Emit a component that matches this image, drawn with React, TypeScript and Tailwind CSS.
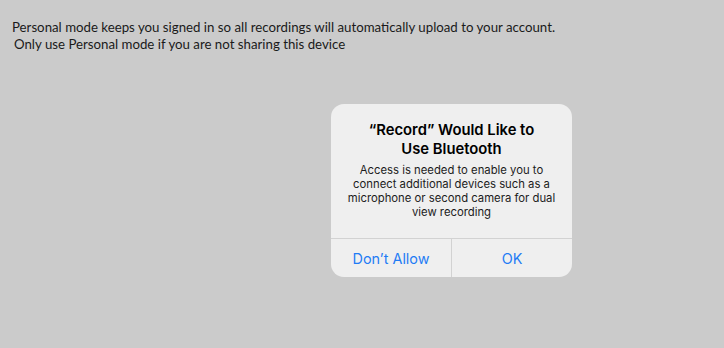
export default function App() {
  return (
    <div className="relative w-[724px] h-[348px] bg-[#cbcbcb] overflow-hidden">
      <div className="pt-[19px] pl-[12px] text-[13.25px] leading-[17px] text-[#1a1a1a]" style={{ fontFamily: 'Lato, "Open Sans", sans-serif' }}>
        <div>Personal mode keeps you signed in so all recordings will automatically upload to your account.</div>
        <div className="pl-[2px]">Only use Personal mode if you are not sharing this device</div>
      </div>
      <div
        className="absolute left-[331px] top-[104px] w-[241px] h-[173px] rounded-[13px] bg-[#efefef] flex flex-col text-center text-black"
        style={{ fontFamily: 'Inter, Roboto, sans-serif' }}
      >
        <div className="flex-1 pt-[17px] px-[4px] whitespace-nowrap">
          <div className="text-[14.8px] leading-[19px] font-semibold">
            “Record” Would Like to<br />Use Bluetooth
          </div>
          <div className="mt-[4px] text-[11.3px] leading-[14.1px] text-[#1c1c1c]">
            Access is needed to enable you to<br />connect additional devices such as a<br />microphone or second camera for dual<br />view recording
          </div>
        </div>
        <div className="h-[39px] border-t border-[#d2d2d2] flex text-[14.4px] text-[#1f7cf5]">
          <div className="w-[121px] flex items-center justify-center border-r border-[#d2d2d2] pt-[1px]">Don’t Allow</div>
          <div className="flex-1 flex items-center justify-center pt-[1px]">OK</div>
        </div>
      </div>
    </div>
  );
}
